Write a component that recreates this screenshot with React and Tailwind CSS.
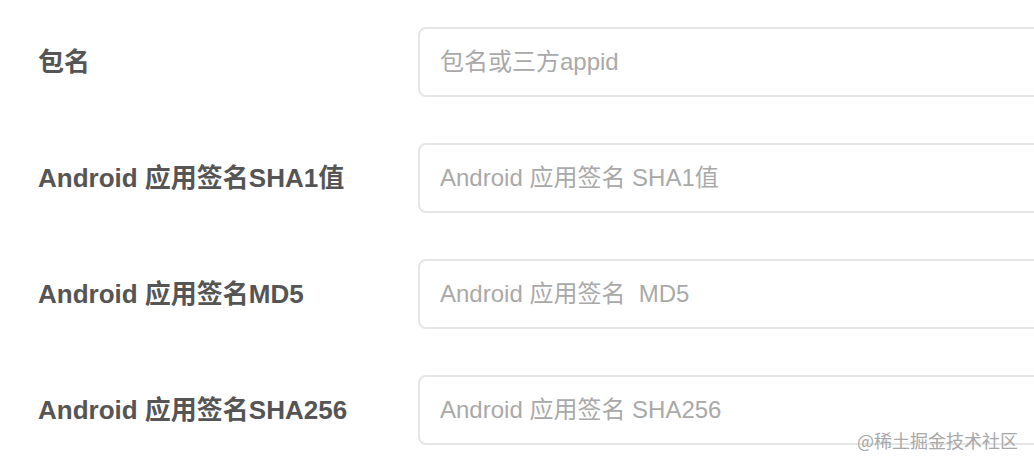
import React from 'react';

const fields = [
  { label: '包名', placeholder: '包名或三方appid' },
  { label: 'Android 应用签名SHA1值', placeholder: 'Android 应用签名 SHA1值' },
  { label: 'Android 应用签名MD5', placeholder: 'Android 应用签名  MD5' },
  { label: 'Android 应用签名SHA256', placeholder: 'Android 应用签名 SHA256' },
];

const font = { fontFamily: '"Liberation Sans", "Noto Sans CJK SC", sans-serif' };

export default function App() {
  return (
    <div className="relative w-[1034px] h-[464px] overflow-hidden bg-white" style={font}>
      <div className="flex flex-col gap-[46px] pt-[27px] pl-[38px]">
        {fields.map((f) => (
          <div key={f.label} className="flex items-center">
            <label className="w-[380px] shrink-0 text-[26px] font-bold text-[#555555] whitespace-pre">
              {f.label}
            </label>
            <input
              className="w-[700px] shrink-0 h-[70px] rounded-lg border-2 border-[#e6e6e6] px-[20px] text-[24px] text-[#555] placeholder:text-[#a9a9a9] outline-none"
              placeholder={f.placeholder}
              style={font}
            />
          </div>
        ))}
      </div>
      <div
        className="absolute right-[16px] top-[428px] text-[18px] leading-[24px] text-[#a8a8a8]"
        style={{ fontFamily: '"Noto Sans CJK SC", sans-serif' }}
      >
        @稀土掘金技术社区
      </div>
    </div>
  );
}
